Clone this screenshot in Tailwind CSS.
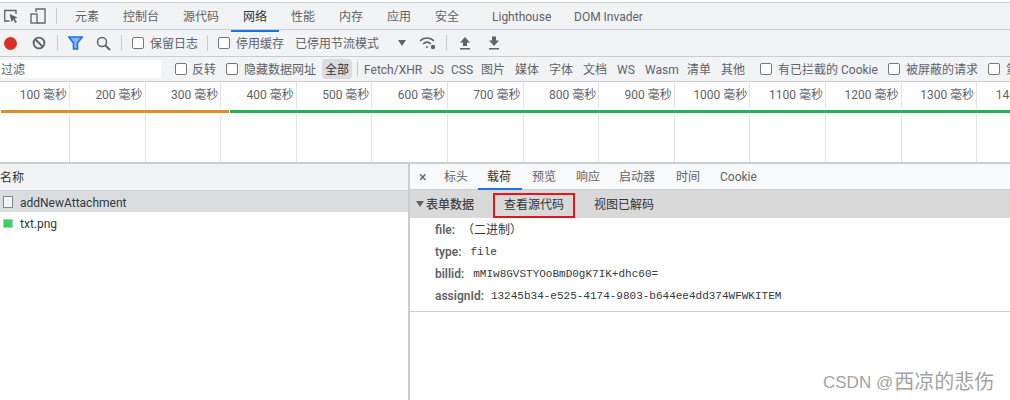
<!DOCTYPE html>
<html lang="zh">
<head>
  <meta charset="UTF-8">
  <title>网络</title>
  <script src="https://cdn.jsdelivr.net/npm/@tailwindcss/browser@4"></script>
</head>
<body class="relative w-[1010px] h-[400px] overflow-hidden bg-white text-[12px] leading-none text-[#5f6368] font-['Roboto','Noto_Sans_CJK_SC',sans-serif]">

  <!-- main tabs -->
  <div class="h-[30px] pt-[2px] bg-white">
    <div class="flex items-center h-[28px] bg-[#f1f3f4] border-t border-b border-[#cbcdd1] pl-[4px]">
      <svg class="w-[16px] h-[16px]" viewBox="0 0 16 16" fill="none">
        <path d="M5.500 13H0.700V2.500H12V6" stroke="#5f6368" stroke-width="1.300"/>
        <path d="M5.500 6L13.500 9.500 10.500 10.800 13 14 11.500 15 9.300 11.800 7.500 14z" fill="#5f6368"/>
      </svg>
      <svg class="w-[16px] h-[16px] ml-[10px]" viewBox="0 0 16 16" fill="none" stroke="#5f6368" stroke-width="1.300">
        <path d="M6 4V1H15V15H7"/>
        <rect x="1" y="6" width="6" height="9"/>
      </svg>
      <div class="w-px h-[16px] bg-[#cbcdd1] ml-[10px] mr-[18px]"></div>
      <span class="w-[48px] translate-y-px">元素</span>
      <span class="w-[60px] translate-y-px">控制台</span>
      <span class="w-[60px] translate-y-px">源代码</span>
      <span class="relative w-[48px] translate-y-px text-[#333]">网络<i class="absolute left-[-12px] bottom-[-9px] w-[48px] h-[2px] bg-[#1a73e8]"></i></span>
      <span class="w-[48px] translate-y-px">性能</span>
      <span class="w-[48px] translate-y-px">内存</span>
      <span class="w-[48px] translate-y-px">应用</span>
      <span class="w-[57px] translate-y-px">安全</span>
      <span class="w-[82px] translate-y-px">Lighthouse</span>
      <span class="translate-y-px">DOM Invader</span>
    </div>
  </div>

  <!-- toolbar -->
  <div class="flex items-center h-[27px] bg-[#f1f3f4] border-b border-[#cbcdd1] pl-[4px] whitespace-nowrap">
    <span class="shrink-0 w-[13px] h-[13px] rounded-full bg-[#dc3027]"></span>
    <svg class="shrink-0 w-[14px] h-[14px] ml-[15px]" viewBox="0 0 15 15" fill="none" stroke="#5f6368" stroke-width="2">
      <circle cx="7.500" cy="7.500" r="5.800"/>
      <path d="M3.500 3.500L11.500 11.500"/>
    </svg>
    <div class="w-px h-[16px] bg-[#cbcdd1] ml-[11px] mr-[10px]"></div>
    <svg class="shrink-0 w-[15px] h-[14px]" viewBox="0 0 15 14"><path d="M0.800 1H14.200L9.500 7V13H5.500V7z" fill="#8ab4f8" stroke="#1a73e8" stroke-width="1.600"/></svg>
    <svg class="shrink-0 w-[15px] h-[15px] ml-[13px]" viewBox="0 0 15 15" fill="none" stroke="#5f6368" stroke-width="1.500">
      <circle cx="6" cy="6" r="4.500"/>
      <path d="M9.500 9.500L14 14" stroke-width="2"/>
    </svg>
    <div class="w-px h-[16px] bg-[#cbcdd1] ml-[10px] mr-[10px]"></div>
    <span class="shrink-0 w-[12px] h-[12px] border border-[#767676] rounded-[2px] bg-white mr-[6px]"></span>
    <span class="w-[48px] translate-y-px">保留日志</span>
    <div class="w-px h-[16px] bg-[#cbcdd1] ml-[9px] mr-[10px]"></div>
    <span class="shrink-0 w-[12px] h-[12px] border border-[#767676] rounded-[2px] bg-white mr-[6px]"></span>
    <span class="w-[48px] mr-[11px] translate-y-px">停用缓存</span>
    <span class="w-[84px] translate-y-px">已停用节流模式</span>
    <span class="ml-[19px] border-x-[4px] border-x-transparent border-t-[6px] border-t-[#5f6368]"></span>
    <svg class="shrink-0 w-[18px] h-[14px] ml-[13px]" viewBox="0 0 18 14" fill="none" stroke="#5f6368" stroke-width="1.500">
      <path d="M1 5C5 1 11 1 15 5M4 8C6.500 5.500 9.500 5.500 12 8"/>
      <circle cx="8" cy="11" r="1" fill="#5f6368" stroke="none"/>
      <circle cx="14" cy="11" r="2.200" fill="#5f6368" stroke="none"/>
    </svg>
    <div class="w-px h-[16px] bg-[#cbcdd1] ml-[9px] mr-[12px]"></div>
    <svg class="shrink-0 w-[12px] h-[14px]" viewBox="0 0 12 14" fill="#5f6368"><path d="M6 1L11 6.500H8V10H4V6.500H1zM1 12H11V13.500H1z"/></svg>
    <svg class="shrink-0 w-[12px] h-[14px] ml-[17px]" viewBox="0 0 12 14" fill="#5f6368"><path d="M4 0.500H8V4.500H11L6 10 1 4.500H4zM1 12H11V13.500H1z"/></svg>
  </div>

  <!-- filter row -->
  <div class="flex items-center h-[25px] bg-[#f1f3f4] border-b border-[#cbcdd1] whitespace-nowrap overflow-hidden">
    <div class="flex items-center shrink-0 w-[161px] h-[18px] bg-white mr-[14px]"><span class="pl-[1px] translate-y-px">过滤</span></div>
    <span class="shrink-0 w-[12px] h-[12px] border border-[#767676] rounded-[2px] bg-white mr-[5px]"></span>
    <span class="shrink-0 w-[24px] mr-[10px] translate-y-px">反转</span>
    <span class="shrink-0 w-[12px] h-[12px] border border-[#767676] rounded-[2px] bg-white mr-[6px]"></span>
    <span class="shrink-0 w-[72px] mr-[6px] translate-y-px">隐藏数据网址</span>
    <span class="shrink-0 px-[3px] pt-[5px] pb-[3px] rounded-[4px] bg-[#dadce0] text-[#333]">全部</span>
    <div class="shrink-0 w-px h-[16px] bg-[#cbcdd1] ml-[5px] mr-[6px]"></div>
    <span class="shrink-0 w-[66px] translate-y-px">Fetch/XHR</span>
    <span class="shrink-0 w-[21px] translate-y-px">JS</span>
    <span class="shrink-0 w-[30px] translate-y-px">CSS</span>
    <span class="shrink-0 w-[34px] translate-y-px">图片</span>
    <span class="shrink-0 w-[34px] translate-y-px">媒体</span>
    <span class="shrink-0 w-[34px] translate-y-px">字体</span>
    <span class="shrink-0 w-[34px] translate-y-px">文档</span>
    <span class="shrink-0 w-[28px] translate-y-px">WS</span>
    <span class="shrink-0 w-[42px] translate-y-px">Wasm</span>
    <span class="shrink-0 w-[34px] translate-y-px">清单</span>
    <span class="shrink-0 w-[39px] translate-y-px">其他</span>
    <span class="shrink-0 w-[12px] h-[12px] border border-[#767676] rounded-[2px] bg-white mr-[6px]"></span>
    <span class="shrink-0 w-[99px] mr-[11px] translate-y-px">有已拦截的 Cookie</span>
    <span class="shrink-0 w-[12px] h-[12px] border border-[#767676] rounded-[2px] bg-white mr-[6px]"></span>
    <span class="shrink-0 w-[72px] mr-[10px] translate-y-px">被屏蔽的请求</span>
    <span class="shrink-0 w-[12px] h-[12px] border border-[#767676] rounded-[2px] bg-white mr-[6px]"></span>
    <span class="shrink-0 translate-y-px">第三方请求</span>
  </div>

  <!-- timeline -->
  <div class="relative h-[82px] bg-white border-b-[2px] border-[#cbcdd1] overflow-hidden">
    <div class="flex h-full w-[1100px]">
      <div class="w-[70px] shrink-0 border-r border-[#e3e4e6] pt-[7px] pr-[2px] text-right whitespace-nowrap">100 毫秒</div>
      <div class="w-[75.600px] shrink-0 border-r border-[#e3e4e6] pt-[7px] pr-[2px] text-right whitespace-nowrap">200 毫秒</div>
      <div class="w-[75.600px] shrink-0 border-r border-[#e3e4e6] pt-[7px] pr-[2px] text-right whitespace-nowrap">300 毫秒</div>
      <div class="w-[75.600px] shrink-0 border-r border-[#e3e4e6] pt-[7px] pr-[2px] text-right whitespace-nowrap">400 毫秒</div>
      <div class="w-[75.600px] shrink-0 border-r border-[#e3e4e6] pt-[7px] pr-[2px] text-right whitespace-nowrap">500 毫秒</div>
      <div class="w-[75.600px] shrink-0 border-r border-[#e3e4e6] pt-[7px] pr-[2px] text-right whitespace-nowrap">600 毫秒</div>
      <div class="w-[75.600px] shrink-0 border-r border-[#e3e4e6] pt-[7px] pr-[2px] text-right whitespace-nowrap">700 毫秒</div>
      <div class="w-[75.600px] shrink-0 border-r border-[#e3e4e6] pt-[7px] pr-[2px] text-right whitespace-nowrap">800 毫秒</div>
      <div class="w-[75.600px] shrink-0 border-r border-[#e3e4e6] pt-[7px] pr-[2px] text-right whitespace-nowrap">900 毫秒</div>
      <div class="w-[75.600px] shrink-0 border-r border-[#e3e4e6] pt-[7px] pr-[2px] text-right whitespace-nowrap">1000 毫秒</div>
      <div class="w-[75.600px] shrink-0 border-r border-[#e3e4e6] pt-[7px] pr-[2px] text-right whitespace-nowrap">1100 毫秒</div>
      <div class="w-[75.600px] shrink-0 border-r border-[#e3e4e6] pt-[7px] pr-[2px] text-right whitespace-nowrap">1200 毫秒</div>
      <div class="w-[75.600px] shrink-0 border-r border-[#e3e4e6] pt-[7px] pr-[2px] text-right whitespace-nowrap">1300 毫秒</div>
      <div class="w-[75.600px] shrink-0 border-r border-[#e3e4e6] pt-[7px] pr-[2px] text-right whitespace-nowrap">1400 毫秒</div>
    </div>
    <div class="absolute left-0 right-0 top-[27px] h-[5px] flex items-center bg-white pl-[1px]">
      <div class="w-[228px] h-[3px] bg-[#e08f27] mr-[1px]"></div>
      <div class="flex-1 h-[3px] bg-[#23b35f]"></div>
    </div>
  </div>

  <!-- lower panes -->
  <div class="flex h-[236px]">
    <div class="w-[410px] shrink-0 border-r-[2px] border-[#cbcdd1]">
      <div class="flex items-center h-[27px] bg-[#f1f3f4] border-b border-[#cbcdd1] text-[#333]"><span class="translate-y-px">名称</span></div>
      <div class="flex items-center h-[21px] bg-[#dadce0] pl-[3px] text-[#303942]">
        <span class="w-[10px] h-[12px] border border-[#80868b] bg-[#f1f3f4] mr-[7px]"></span><span class="translate-y-px">addNewAttachment</span>
      </div>
      <div class="flex items-center h-[22px] pl-[3px] text-[#303942]">
        <span class="w-[10px] h-[9px] bg-[#3ccf63] border border-[#9adcae] mr-[7px]"></span><span class="translate-y-px">txt.png</span>
      </div>
    </div>
    <div class="flex-1 min-w-0">
      <div class="flex items-center h-[26px] border-b border-[#cbcdd1] pl-[9px] bg-[#f8f9fa]">
        <span class="w-[9px] mr-[16px] text-[14px]">×</span>
        <span class="w-[43px]">标头</span>
        <span class="relative w-[45px] text-[#333]">载荷<i class="absolute left-[-9px] bottom-[-7px] w-[44px] h-[2px] bg-[#1a73e8]"></i></span>
        <span class="w-[44px]">预览</span>
        <span class="w-[43px]">响应</span>
        <span class="w-[57px]">启动器</span>
        <span class="w-[44px]">时间</span>
        <span>Cookie</span>
      </div>
      <div class="relative flex items-center h-[28px] bg-[#d9d9d9] pl-[6px] text-[#333]">
        <span class="border-x-[4px] border-x-transparent border-t-[6px] border-t-[#5f6368] mr-[2px]"></span>
        <span class="font-medium text-[#444] w-[78px] translate-y-px">表单数据</span>
        <span class="w-[90px] translate-y-px">查看源代码</span>
        <span class="translate-y-px">视图已解码</span>
        <div class="absolute left-[83px] top-[3px] w-[82px] h-[25px] border-[2px] border-[#e5141f]"></div>
      </div>
      <div class="border-b border-[#cbcdd1] h-[94px] pt-[1px] pl-[25px]">
        <div class="flex items-center h-[22px]"><b class="font-semibold mr-[7px]">file:</b><span class="text-[#303942]">（二进制）</span></div>
        <div class="flex items-center h-[22px]"><b class="font-semibold mr-[9px]">type:</b><span class="font-['Liberation_Mono',monospace] text-[11px] text-[#303942]">file</span></div>
        <div class="flex items-center h-[22px]"><b class="font-semibold mr-[9px]">billid:</b><span class="font-['Liberation_Mono',monospace] text-[11px] text-[#303942]">mMIw8GVSTYOoBmD0gK7IK+dhc60=</span></div>
        <div class="flex items-center h-[22px]"><b class="font-semibold mr-[7px]">assignId:</b><span class="font-['Liberation_Mono',monospace] text-[11px] text-[#303942]">13245b34-e525-4174-9803-b644ee4dd374WFWKITEM</span></div>
      </div>
    </div>
  </div>

  <!-- watermark -->
  <div class="absolute left-[823px] top-[371px] flex items-center h-[22px] text-[17px] text-[#a3a3a3] font-['Liberation_Sans','Noto_Sans_CJK_SC',sans-serif]">CSDN @<span class="ml-[1px] text-[20px]">西凉的悲伤</span></div>
</body>
</html>
